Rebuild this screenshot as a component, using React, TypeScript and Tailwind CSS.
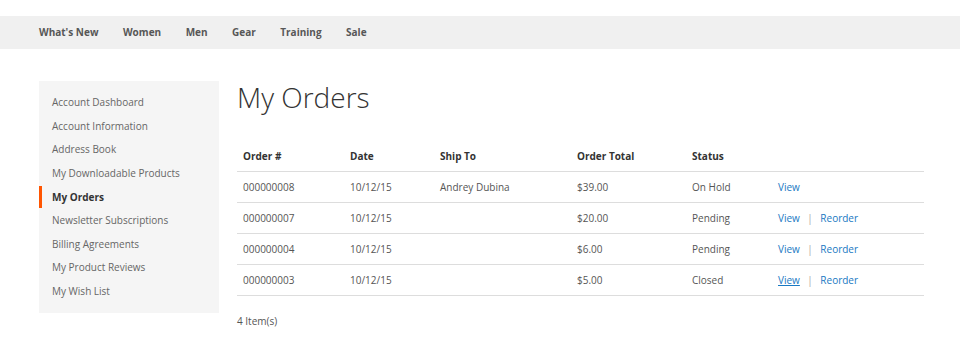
import React from "react";

const nav = ["What's New", "Women", "Men", "Gear", "Training", "Sale"];
const side = [
  "Account Dashboard",
  "Account Information",
  "Address Book",
  "My Downloadable Products",
  "My Orders",
  "Newsletter Subscriptions",
  "Billing Agreements",
  "My Product Reviews",
  "My Wish List",
];
const orders = [
  { id: "000000008", date: "10/12/15", ship: "Andrey Dubina", total: "$39.00", status: "On Hold", reorder: false, u: false },
  { id: "000000007", date: "10/12/15", ship: "", total: "$20.00", status: "Pending", reorder: true, u: false },
  { id: "000000004", date: "10/12/15", ship: "", total: "$6.00", status: "Pending", reorder: true, u: false },
  { id: "000000003", date: "10/12/15", ship: "", total: "$5.00", status: "Closed", reorder: true, u: true },
];

export default function App() {
  return (
    <div className="w-[960px] h-[350px] bg-white overflow-hidden text-[#555] text-[10px]" style={{ fontFamily: '"Open Sans", sans-serif' }}>
      <div className="h-4" />
      <div className="h-[33px] bg-[#f0f0f0] flex items-center pl-[39px]">
        {nav.map((n, i) => (
          <span key={n} className={`font-bold text-[#575757] text-[10px] ${i < nav.length - 1 ? "mr-[24.5px]" : ""}`}>
            {n}
          </span>
        ))}
      </div>
      <div className="flex pl-[39px] pt-8">
        <div className="w-[180px] h-[232px] bg-[#f5f5f5] pt-[10px] shrink-0">
          {side.map((s) => {
            const active = s === "My Orders";
            return (
              <div key={s} className="relative h-[23.6px] flex items-center pl-[13px]">
                {active && <div className="absolute left-0 top-[1px] bottom-[1px] w-[3px] bg-[#ff5501]" />}
                <span className={active ? "font-bold text-[#333]" : "text-[#666]"}>{s}</span>
              </div>
            );
          })}
        </div>
        <div className="ml-[18px] w-[687px]">
          <h1 className="text-[28px] font-light leading-none mt-[2px] text-[#333]">My Orders</h1>
          <div className="mt-[31px]">
            <div className="flex h-[30px] items-center font-bold text-[#333] border-b border-[#ddd] pl-[6px]">
              <div className="w-[107px]">Order #</div>
              <div className="w-[90px]">Date</div>
              <div className="w-[137px]">Ship To</div>
              <div className="w-[115px]">Order Total</div>
              <div className="w-[86px]">Status</div>
              <div />
            </div>
            {orders.map((o) => (
              <div key={o.id} className="flex h-[31px] items-center border-b border-[#ddd] pl-[6px]">
                <div className="w-[107px]">{o.id}</div>
                <div className="w-[90px]">{o.date}</div>
                <div className="w-[137px]">{o.ship}</div>
                <div className="w-[115px]">{o.total}</div>
                <div className="w-[86px]">{o.status}</div>
                <div className="flex items-center text-[#1979c3]">
                  <span className={o.u ? "underline" : ""}>View</span>
                  {o.reorder && (
                    <>
                      <span className="mx-[7.5px] text-[#a6a6a6]">|</span>
                      <span>Reorder</span>
                    </>
                  )}
                </div>
              </div>
            ))}
            <div className="mt-[18px]">4 Item(s)</div>
          </div>
        </div>
      </div>
    </div>
  );
}
